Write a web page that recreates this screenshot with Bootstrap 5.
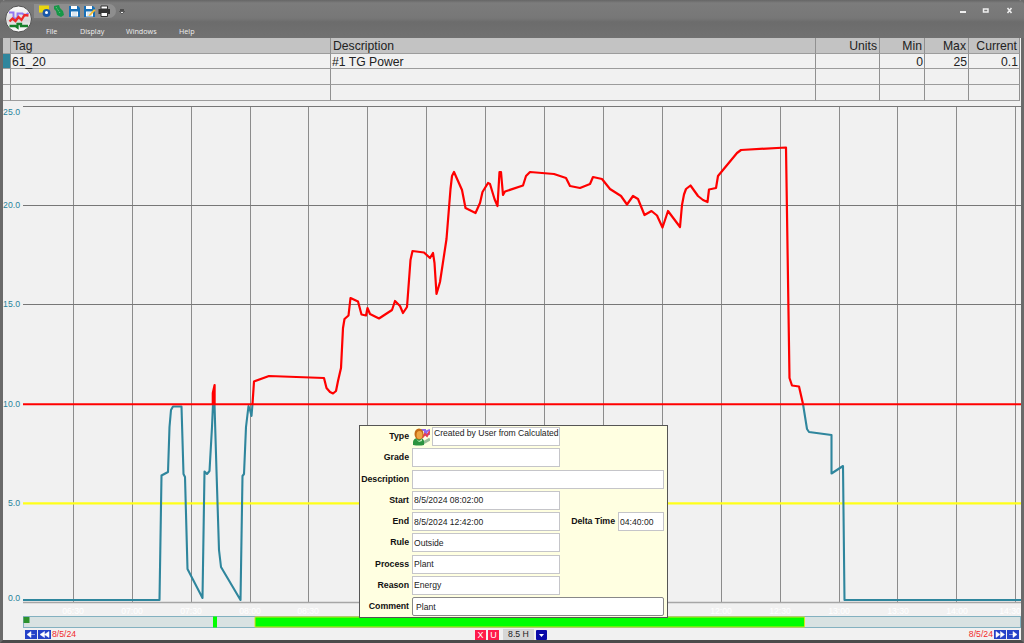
<!DOCTYPE html>
<html lang="en">
<head>
<meta charset="utf-8">
<meta name="viewport" content="width=device-width, initial-scale=1">
<title>Trend - 61_20</title>
<link href="https://cdn.jsdelivr.net/npm/bootstrap@5.3.0/dist/css/bootstrap.min.css" rel="stylesheet">
<style>
body{font-family:"Liberation Sans",Arial,sans-serif;font-size:9px;line-height:1;background:#f1f1f1;color:#222}
.win{width:1024px;height:643px;border:solid #6a6a6a;border-width:0 3px 3px;border-bottom-color:#4b4b4b;background:#f1f1f1}
.ribbon{height:38px;flex:none;margin:0 -3px;background:linear-gradient(#666 0,#7c7c7c 3px,#777 18px,#6c6c6c 22px,#717171 38px);color:#eee;border-radius:5px 5px 0 0}
.orb{width:42px;padding:4px 0 0 4px}
.quick{height:14px;width:82px;margin-top:4px;margin-left:-8px;padding-left:13px;background:#8e8e8e;border-radius:0 8px 8px 0}
.quick svg,.strip svg{overflow:visible}
.menus{font:7.2px "Open Sans",sans-serif;height:20px;padding:8px 0 0 4px}
.menus span{white-space:nowrap}
.tags{display:grid;grid-template-columns:8px 320px 485px 64px 45px 44px 51px;grid-template-rows:16px 15px 16px 16px;font-size:12.2px;height:63px;flex:none;background:#f1f1f1}
.tags>div{border-right:1.500px solid #909090;border-bottom:1px solid #9c9c9c;padding:1px 1px 0;line-height:14px;white-space:nowrap}
.tags>.hd{background:#c3c3c3;padding:1px 2px 0}
.tags>.r{text-align:right}
.tags>.key{background:#2f869d}
.plot{height:515px;flex:none}
.plot svg{display:block}
.event{left:356px;top:425px;width:309px;height:193px;background:#ffffe1;border:1px solid #555;padding:0 3px 0 0}
.frow{height:21.25px}
.frow label{width:49px;text-align:right;font-weight:700;color:#111;font-size:8.8px;letter-spacing:-.05px;white-space:nowrap}
.field{height:19px;margin-left:3px;border:1px solid #c5c5c9;background:#fff;width:148px;font-size:8.6px;padding:4.500px 1px 0 1px;line-height:8px;white-space:nowrap;color:#222}
.field.wide{width:252px}
.field.kind{width:128px;margin-left:2px;padding:1px 0 0 1px;letter-spacing:-.02px}
.strip{height:12px;flex:none;margin:0 0 0 20px;background:#d8e2e2;border:1px solid #83b1c0}
.bottom{height:12px;font-size:8.7px;display:grid;grid-template-columns:450px 1fr auto;padding:1px 1px 0 22px}
.red{color:#f22b2b}
.btnx{height:10px;width:11px;background:#ff1b4b;color:#fff;text-align:center;line-height:10px;font-size:9px}
.span-time{width:31px;background:#d6d6d6;line-height:11px;margin-left:4px;text-align:center}
</style>
</head>
<body class="m-0 overflow-hidden">
<div class="win d-flex flex-column position-relative">
  <header class="ribbon d-flex">
    <div class="orb">
      <svg width="30" height="30" viewBox="0 0 30 30" class="d-block">
        <defs><linearGradient id="g" x2="0" y2="1"><stop stop-color="#fff"/><stop offset=".55" stop-color="#d8d8d8"/><stop offset="1" stop-color="#fff"/></linearGradient></defs>
        <circle cx="14.500" cy="15" r="13" fill="url(#g)" stroke="#505050"/>
        <path d="M5 8.500h4.500v6h4V9.500h5l2 2 4-2.500" fill="none" stroke="#9277f2" stroke-width="1.900"/>
        <path d="M5.500 17.500l3-3 3 2.500 3-4 3 3 3-5 4 .5" fill="none" stroke="#ef2929" stroke-width="2.300"/>
        <path d="M5.500 22h6l2 1.500v-3.500h3.500v2h7" fill="none" stroke="#16802a" stroke-width="2.300"/>
      </svg>
    </div>
    <div class="d-flex flex-column">
      <div class="quick">
        <svg width="90" height="14" viewBox="0 0 90 14" class="d-block">
          <path d="M-8 1.500h10v8h-3l-3-1h-4z" fill="#ead60f"/>
          <circle cx="-.5" cy="9" r="3.900" fill="#1857a8"/><circle cx="-.5" cy="8.500" r="1.500" fill="#fff"/>
          <path d="M7 2l5-1 1 3 3 3 1 4-3 2-4-2-1-4-2-2z" fill="#169747"/>
          <path d="M9 3l4 6" stroke="#7ac492" stroke-dasharray="1"/>
          <g id="disk"><path d="M22 2h9l2 2v9H22z" fill="#176fb6"/><path d="M24 2h6v3h-6zM24 7.500h7v5h-7z" fill="#fff"/><path d="M25 9h5m-5 2h5" stroke="#bcd0df"/></g>
          <use href="#disk" x="15"/><path d="M42 11l5-6 1.500 1.500-5 5-2 .5z" fill="#f4bb2b"/>
          <path d="M54 2h6.500v3h-6.500z" fill="#fff" stroke="#333"/><path d="M51.500 5h11.500v5H51.500z" fill="#333"/><path d="M54 8.500h6.500v4h-6.500z" fill="#fff" stroke="#333"/>
          <path d="M73 6h4" stroke="#222"/><path d="M72.500 7.500h5l-2.500 2.500z" fill="#eee" stroke="#333" stroke-width=".7"/>
        </svg>
      </div>
      <nav class="menus d-flex"><span style="width:34px">File</span><span style="width:46px">Display</span><span style="width:53px">Windows</span><span>Help</span></nav>
    </div>
    <svg class="ms-auto" width="64" height="20"><path d="M-1 12h7" stroke="#eee" stroke-width="2"/><path d="M23.500 9h4.500v3h-4.500z" fill="none" stroke="#eee" stroke-width="1.500"/><path d="M47.500 8l4 5m0-5l-4 5" stroke="#eee" stroke-width="1.600"/></svg>
  </header>

  <section class="tags">
    <div class="hd"></div><div class="hd">Tag</div><div class="hd">Description</div><div class="hd r">Units</div><div class="hd r">Min</div><div class="hd r">Max</div><div class="hd r">Current</div>
    <div class="key"></div><div>61_20</div><div>#1 TG Power</div><div></div><div class="r">0</div><div class="r">25</div><div class="r">0.1</div>
    <div></div><div></div><div></div><div></div><div></div><div></div><div></div>
    <div></div><div></div><div></div><div></div><div></div><div></div><div></div>
  </section>

  <main class="plot">
    <svg width="1018" height="515" viewBox="3 101 1018 515" font-family="Liberation Sans, sans-serif" font-size="8.700">
      <path d="M73.500 106V602M132.500 106V602M191.500 106V602M250.500 106V602M308.500 106V602M367.500 106V602M426.500 106V602M485.500 106V602M544.500 106V602M603.500 106V602M662.500 106V602M721.500 106V602M780.500 106V602M839.500 106V602M897.500 106V602M956.500 106V602M1015.500 106V602" stroke="#8c8c8c"/>
      <path d="M23 106.500H1021M23 205.500H1021M23 304.500H1021" stroke="#777"/>
      <path d="M23 602.500H1021" stroke="#a6a6a6" stroke-width="1.300"/>
      <path d="M23 503.300H1021" stroke="#ffff19" stroke-width="2.300"/>
      <g fill="none" stroke-width="2.100" stroke-linejoin="round">
        <path stroke="#2f869d" d="M23 600H159.500L161.500 475.500L168 472L169.500 427L171 410L173 406.500H181.500L183.500 474L185 477L187.500 569L202.500 598L204.500 471.500L207 474L209.500 471L212 427L213 404M214.500 404L216.500 471L219 550L221 567L240.500 600L242.500 476L244 474L246 427L248.500 406L250 410L251.500 416L252.500 404M803 404L807 429L809 432L831.500 435V473.500L843 466L844.500 600H1021"/>
        <path stroke="#f00" stroke-width="2.200" d="M212.800 404V393L214.600 385V404M252.500 404L254 381.500L269 376L324 378L326.500 388L330 392L333 393.500L336 391L338 381L341 368L343 328L344.500 319L348.500 315.500L350.500 298L358 301.500L361.500 314.500L366 315.500L367.500 308L370 314L379 318.500L392 310L395 301L400 306L403 313L407 307L410.500 260L412.500 251L424 252.500L430 258L433 253L434.500 263L436.500 294L440 282L446.500 239L450.500 189L452 176L454 172L462 190L465.500 208L475.500 213L480 203L482.500 192L488 183L490 184L494.500 199L497.500 206L499.500 172H501L503 195L505 191.500L523 185.500L526 176L530 172L554 174L566 178L570 186L580 188L590 184L593 177L602 179L610 189L621 196L627 204.500L633 196L638 199L644.500 215L651.500 211L657 215.500L662.500 227.500L668 211L680 227L682 205L684 194.500L686 189L690.500 185.500L698 196L703 200L707.500 202L709 189.500L716 188L718 176L737 153L741 150L786 147.500L789.500 378L792 385.500L799 386.500L803 404"/>
      </g>
      <path d="M23 404.300H1021" stroke="#f00" stroke-width="2"/>
      <g fill="#29839b" text-anchor="end"><text x="20" y="114.500">25.0</text><text x="20" y="208">20.0</text><text x="20" y="307">15.0</text><text x="20" y="407">10.0</text><text x="20" y="506">5.0</text><text x="20" y="600.500">0.0</text></g>
      <g fill="#fff" text-anchor="middle"><text x="73" y="614">06:30</text><text x="132" y="614">07:00</text><text x="191" y="614">07:30</text><text x="250" y="614">08:00</text><text x="308" y="614">08:30</text><text x="721" y="614">12:00</text><text x="780" y="614">12:30</text><text x="839" y="614">13:00</text><text x="898" y="614">13:30</text><text x="957" y="614">14:00</text><text x="1010" y="614">14:30</text></g>
    </svg>
  </main>

  <div class="strip">
    <svg width="996" height="10" viewBox="24 617 996 10" class="d-block"><path d="M23.500 617h6v6h-6z" fill="#2d922d"/><path d="M213 616.500h4v11h-4z" fill="#0f0"/><path d="M255 617h549.500v10H255z" fill="#0f0" stroke="#d8e51c"/></svg>
  </div>
  <footer class="bottom">
    <div class="d-flex align-items-center red">
      <svg width="26" height="9" viewBox="24 0 26 9"><path d="M24 0h12v9H24zM37 0h13v9H37z" fill="#2542c8"/><path d="M30 1.500L26 4.500l4 3zM30 4.500h4M43.500 1.500L39 4.500l4.500 3zM48 1.500l-4.500 3 4.500 3z" fill="#fff" stroke="#fff" stroke-width=".5"/></svg><span style="margin-left:1px">8/5/24</span>
    </div>
    <div class="d-flex align-items-center">
      <span class="btnx">X</span><span class="btnx" style="margin-left:2px">U</span><span class="span-time">8.5 H</span>
      <svg width="11" height="10" style="margin-left:2px"><rect width="11" height="10" rx="1" fill="#0808a8"/><path d="M3 4h5L5.500 7z" fill="#fff"/></svg>
    </div>
    <div class="d-flex align-items-center red"><span>8/5/24</span>
      <svg width="27" height="9"><path d="M1 0h12v9H1zM14 0h12v9H14z" fill="#2542c8"/><path d="M3 1.500l4 3-4 3zM7.500 1.500l4 3-4 3zM16 4.500h4M20 1.500l4 3-4 3z" fill="#fff" stroke="#fff" stroke-width=".5"/></svg></div>
  </footer>

  <section class="event position-absolute">
    <div class="frow d-flex align-items-center"><label>Type</label>
      <svg width="18" height="18" viewBox="0 0 18 18" style="margin-left:3px"><path d="M9 2h4v4h5M10 8l3-1 2-4 3-1" fill="none" stroke="#8d68ef" stroke-width="2"/><path d="M10 10l3-4 2 2 3-5" fill="none" stroke="#e53f54" stroke-width="2"/><path d="M11 15l7-4" stroke="#99bd98" stroke-width="3"/><path d="M1 17q-1-6 4-7h4q4 1 3 7-5 1-11 0z" fill="#2b933f"/><ellipse cx="7" cy="6" rx="4.500" ry="5.500" fill="#c56a13"/><ellipse cx="7.500" cy="7" rx="3" ry="4" fill="#efa543"/><path d="M4 11l3 2 3-2v2l-3 1z" fill="#bce5b5"/></svg>
      <div class="field kind">Created by User from Calculated</div></div>
    <div class="frow d-flex align-items-center"><label>Grade</label><div class="field"></div></div>
    <div class="frow d-flex align-items-center"><label>Description</label><div class="field wide"></div></div>
    <div class="frow d-flex align-items-center"><label>Start</label><div class="field">8/5/2024 08:02:00</div></div>
    <div class="frow d-flex align-items-center"><label>End</label><div class="field">8/5/2024 12:42:00</div><label style="width:55px">Delta Time</label><div class="field" style="width:46px">04:40:00</div></div>
    <div class="frow d-flex align-items-center"><label>Rule</label><div class="field">Outside</div></div>
    <div class="frow d-flex align-items-center"><label>Process</label><div class="field">Plant</div></div>
    <div class="frow d-flex align-items-center"><label>Reason</label><div class="field">Energy</div></div>
    <div class="frow d-flex align-items-center"><label>Comment</label><div class="field wide" style="border-color:#888;border-radius:2px;padding-left:3px">Plant</div></div>
  </section>
</div>
<script src="https://cdn.jsdelivr.net/npm/bootstrap@5.3.0/dist/js/bootstrap.bundle.min.js"></script>
</body>
</html>
